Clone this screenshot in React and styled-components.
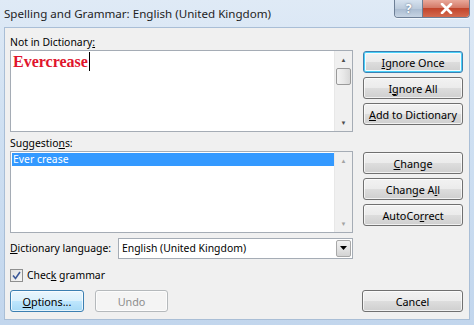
import React from 'react';
import styled, {createGlobalStyle} from 'styled-components';

const Global = createGlobalStyle`
  html, body {
    margin: 0;
    padding: 0;
    background: #c9dcf0;
  }
  body {
    font-family: "Noto Sans", "Open Sans", sans-serif;
  }
`;

const App = () => {
    return (
        <>
            <Global/>
            <Window>
                <TitleBar>
                    <Title>Spelling and Grammar: English (United Kingdom)</Title>
                    <CaptionButtons>
                        <HelpButton>?</HelpButton>
                        <CloseButton>
                            <svg width="13" height="11" viewBox="0 0 13 11">
                                <path d="M2 1 L11 10 M11 1 L2 10" stroke="#ffffff" strokeWidth="2.6" strokeLinecap="round"/>
                            </svg>
                        </CloseButton>
                    </CaptionButtons>
                </TitleBar>
                <Body>
                    <Grid>
                        <Label>Not in Dictionary<u>:</u></Label>
                        <span/>
                        <TextBox>
                            <EditArea>
                                <Misspelled>Evercrease</Misspelled>
                                <Caret/>
                            </EditArea>
                            <ScrollBar>
                                <Arrow>▲</Arrow>
                                <Thumb/>
                                <Track/>
                                <Arrow>▼</Arrow>
                            </ScrollBar>
                        </TextBox>
                        <ButtonStack>
                            <Button $focused><u>I</u>gnore Once</Button>
                            <Button>I<u>g</u>nore All</Button>
                            <Button><u>A</u>dd to Dictionary</Button>
                        </ButtonStack>

                        <Label $top={4}>Suggestio<u>n</u>s:</Label>
                        <span/>
                        <TextBox>
                            <ListArea>
                                <ListItem $selected>Ever crease</ListItem>
                            </ListArea>
                            <ScrollBar>
                                <Arrow $dim>▲</Arrow>
                                <Track/>
                                <Arrow $dim>▼</Arrow>
                            </ScrollBar>
                        </TextBox>
                        <ButtonStack>
                            <Button><u>C</u>hange</Button>
                            <Button>Change A<u>l</u>l</Button>
                            <Button>AutoCo<u>r</u>rect</Button>
                        </ButtonStack>
                    </Grid>

                    <LanguageRow>
                        <RowLabel><u>D</u>ictionary language:</RowLabel>
                        <Select>
                            <SelectText>English (United Kingdom)</SelectText>
                            <DropButton>
                                <svg width="7" height="4" viewBox="0 0 7 4">
                                    <path d="M0 0 H7 L3.5 4 Z" fill="#000"/>
                                </svg>
                            </DropButton>
                        </Select>
                    </LanguageRow>

                    <CheckRow>
                        <CheckBox>
                            <svg width="9" height="9" viewBox="0 0 9 9">
                                <path d="M1 4.5 L3.5 7.5 L8 1" stroke="#3b5898" strokeWidth="1.6" fill="none"/>
                            </svg>
                        </CheckBox>
                        <span>Chec<u>k</u> grammar</span>
                    </CheckRow>

                    <BottomRow>
                        <Button $hover $width={74}><u>O</u>ptions...</Button>
                        <Button $disabled $width={73}>Undo</Button>
                        <Spacer/>
                        <Button $width={101}>Cancel</Button>
                    </BottomRow>
                </Body>
            </Window>
        </>
    )
}

const Window = styled.div`
  width: 474px;
  height: 325px;
  box-sizing: border-box;
  display: flex;
  flex-direction: column;
  background: linear-gradient(180deg, #dfeaf6 0%, #cfe0f2 40%, #c2d6ed 100%);
  overflow: hidden;
`;

const TitleBar = styled.div`
  height: 27px;
  display: flex;
  align-items: flex-start;
  justify-content: space-between;
  padding-left: 4px;
  padding-right: 4px;
`;

const Title = styled.div`
  font-size: 11.6px;
  line-height: 13px;
  margin-top: 7px;
  color: #1e1e1e;
  white-space: nowrap;
`;

const CaptionButtons = styled.div`
  display: flex;
  height: 17px;
  border: 1px solid #6d7f96;
  border-top: none;
  border-radius: 0 0 4px 4px;
  overflow: hidden;
  box-shadow: 0 1px 0 rgba(255,255,255,0.6);
`;

const HelpButton = styled.div`
  width: 27px;
  display: flex;
  align-items: center;
  justify-content: center;
  font-size: 12px;
  font-weight: bold;
  color: #ffffff;
  text-shadow: 0 0 2px #4a5e78;
  background: linear-gradient(180deg, #d6e2ef 0%, #bccbdc 50%, #a9bbd0 51%, #c6d4e3 100%);
  border-right: 1px solid #6d7f96;
`;

const CloseButton = styled.div`
  width: 46px;
  display: flex;
  align-items: center;
  justify-content: center;
  background: linear-gradient(180deg, #e9a99b 0%, #d47a68 45%, #c2452c 50%, #d46b4f 100%);
`;

const Body = styled.div`
  flex: 1;
  margin: 0 4px 5px 4px;
  background: #f0f0f0;
  border: 1px solid #a9bed6;
  padding: 7px 6px 0 5px;
  display: flex;
  flex-direction: column;
  font-size: 10.4px;
  color: #000;
`;

const Grid = styled.div`
  display: grid;
  grid-template-columns: 343px 100px;
  column-gap: 10px;
`;

const Label = styled.div`
  height: 14px;
  line-height: 14px;
  margin-top: ${p => p.$top || 0}px;
  margin-bottom: 1px;
  white-space: nowrap;
`;

const TextBox = styled.div`
  height: 82px;
  box-sizing: border-box;
  border: 1px solid #a5acb5;
  background: #ffffff;
  display: flex;
`;

const EditArea = styled.div`
  flex: 1;
  display: flex;
  align-items: flex-start;
  padding: 1px 0 0 2px;
`;

const Misspelled = styled.span`
  font-family: "Liberation Serif", serif;
  font-weight: bold;
  font-size: 16px;
  line-height: 19px;
  color: #e0142c;
`;

const Caret = styled.span`
  width: 1px;
  height: 19px;
  background: #000;
  margin-left: 1px;
`;

const ListArea = styled.div`
  flex: 1;
  padding: 1px 0 0 1px;
`;

const ListItem = styled.div`
  height: 13px;
  line-height: 13px;
  padding-left: 1px;
  background: ${p => p.$selected ? '#3399ff' : 'transparent'};
  color: ${p => p.$selected ? '#ffffff' : '#000'};
`;

const ScrollBar = styled.div`
  width: 17px;
  background: #f0f0f0;
  border-left: 1px solid #e8e8e8;
  display: flex;
  flex-direction: column;
`;

const Arrow = styled.div`
  height: 17px;
  font-size: 6px;
  display: flex;
  align-items: center;
  justify-content: center;
  color: ${p => p.$dim ? '#a3a3a3' : '#4d4d4d'};
`;

const Thumb = styled.div`
  height: 15px;
  margin: 0 1px;
  border: 1px solid #9a9a9a;
  border-radius: 2px;
  background: linear-gradient(90deg, #f3f3f3 0%, #e8e8e8 50%, #d8d8d8 100%);
`;

const Track = styled.div`
  flex: 1;
`;

const ButtonStack = styled.div`
  display: flex;
  flex-direction: column;
  gap: 4px;
  padding-top: 1px;
`;

const Button = styled.div`
  box-sizing: border-box;
  width: ${p => p.$width ? p.$width + 'px' : '100%'};
  height: 22px;
  display: flex;
  align-items: center;
  justify-content: center;
  border-radius: 3px;
  white-space: nowrap;
  font-size: 10.8px;
  border: 1px solid ${p => p.$disabled ? '#b5b9bc' : (p.$hover || p.$focused) ? '#3c7fb1' : '#707070'};
  color: ${p => p.$disabled ? '#8d8d8d' : '#000'};
  background: ${p => p.$disabled
    ? '#f4f4f4'
    : p.$hover
        ? 'linear-gradient(180deg, #eaf6fd 0%, #d9f0fc 50%, #bee6fd 51%, #a7d9f5 100%)'
        : 'linear-gradient(180deg, #f2f2f2 0%, #ebebeb 50%, #dddddd 51%, #cfcfcf 100%)'};
  box-shadow: ${p => p.$focused ? 'inset 0 0 0 1px #48d0f8, inset 0 0 0 2px #f4fbfe' : 'inset 0 0 0 1px rgba(255,255,255,0.7)'};
`;

const LanguageRow = styled.div`
  display: flex;
  align-items: center;
  margin-top: 4px;
  height: 22px;
`;

const RowLabel = styled.div`
  width: 108px;
  white-space: nowrap;
`;

const Select = styled.div`
  width: 235px;
  height: 21px;
  box-sizing: border-box;
  border: 1px solid #a5acb5;
  background: #ffffff;
  display: flex;
  align-items: stretch;
`;

const SelectText = styled.div`
  flex: 1;
  display: flex;
  align-items: center;
  padding-left: 3px;
`;

const DropButton = styled.div`
  width: 15px;
  margin: 1px;
  box-sizing: border-box;
  border: 1px solid #a8a8a8;
  border-radius: 2px;
  display: flex;
  align-items: center;
  justify-content: center;
  background: linear-gradient(180deg, #f2f2f2 0%, #e4e4e4 50%, #d3d3d3 100%);
`;

const CheckRow = styled.div`
  display: flex;
  align-items: center;
  gap: 4px;
  margin-top: 9px;
  height: 14px;
`;

const CheckBox = styled.div`
  width: 13px;
  height: 13px;
  box-sizing: border-box;
  border: 1px solid #8e8f8f;
  background: linear-gradient(135deg, #e0e0e0 0%, #f6f6f6 100%);
  display: flex;
  align-items: center;
  justify-content: center;
`;

const BottomRow = styled.div`
  display: flex;
  gap: 11px;
  margin-top: 8px;
`;

const Spacer = styled.div`
  flex: 1;
`;

export default App;
